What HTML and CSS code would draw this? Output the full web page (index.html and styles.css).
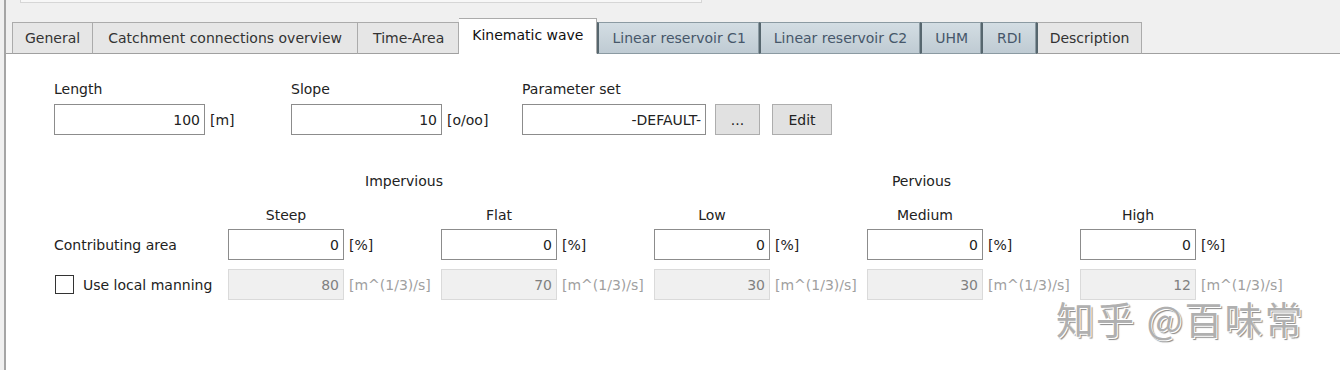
FILE: index.html
```html
<!DOCTYPE html>
<html lang="en">
  <head>
    <meta charset="UTF-8" />
    <meta name="viewport" content="width=device-width, initial-scale=1.0" />
    <title>Kinematic wave</title>
    <link rel="stylesheet" href="styles.css">
  </head>
  <body>
    <div class="window">
      <div class="top-strip">
        <div class="top-field"></div>
      </div>

      <div class="tabs">
        <div class="tab">General</div>
        <div class="tab">Catchment connections overview</div>
        <div class="tab">Time-Area</div>
        <div class="tab active">Kinematic wave</div>
        <div class="tab model">Linear reservoir C1</div>
        <div class="tab model">Linear reservoir C2</div>
        <div class="tab model">UHM</div>
        <div class="tab model">RDI</div>
        <div class="tab">Description</div>
      </div>

      <div class="panel">
        <div class="params">
          <div class="param length">
            <label>Length</label>
            <div class="field-row">
              <input class="num wide" type="text" value="100" readonly />
              <span class="unit">[m]</span>
            </div>
          </div>
          <div class="param slope">
            <label>Slope</label>
            <div class="field-row">
              <input class="num wide" type="text" value="10" readonly />
              <span class="unit">[o/oo]</span>
            </div>
          </div>
          <div class="param">
            <label>Parameter set</label>
            <div class="field-row">
              <input class="num paramset" type="text" value="-DEFAULT-" readonly />
              <button class="btn dots" type="button">...</button>
              <button class="btn edit" type="button">Edit</button>
            </div>
          </div>
        </div>

        <div class="surface-grid">
          <div class="group impervious">Impervious</div>
          <div class="group pervious">Pervious</div>

          <div></div>
          <div class="col-head">Steep</div>
          <div class="col-head">Flat</div>
          <div class="col-head">Low</div>
          <div class="col-head">Medium</div>
          <div class="col-head">High</div>

          <div class="row-label">Contributing area</div>
          <div class="cell"><input class="num small" type="text" value="0" readonly /><span class="unit">[%]</span></div>
          <div class="cell"><input class="num small" type="text" value="0" readonly /><span class="unit">[%]</span></div>
          <div class="cell"><input class="num small" type="text" value="0" readonly /><span class="unit">[%]</span></div>
          <div class="cell"><input class="num small" type="text" value="0" readonly /><span class="unit">[%]</span></div>
          <div class="cell"><input class="num small" type="text" value="0" readonly /><span class="unit">[%]</span></div>

          <div class="row-label check-label"><span class="checkbox"></span>Use local manning</div>
          <div class="cell off"><input class="num small" type="text" value="80" disabled /><span class="unit">[m^(1/3)/s]</span></div>
          <div class="cell off"><input class="num small" type="text" value="70" disabled /><span class="unit">[m^(1/3)/s]</span></div>
          <div class="cell off"><input class="num small" type="text" value="30" disabled /><span class="unit">[m^(1/3)/s]</span></div>
          <div class="cell off"><input class="num small" type="text" value="30" disabled /><span class="unit">[m^(1/3)/s]</span></div>
          <div class="cell off"><input class="num small" type="text" value="12" disabled /><span class="unit">[m^(1/3)/s]</span></div>
        </div>

        <div class="watermark">知乎 @百味常</div>
      </div>
    </div>
  </body>
</html>
```

FILE: styles.css
```css
body {
  margin: 0;
  width: 1340px;
  height: 370px;
  overflow: hidden;
  background-color: #f0f0f0;
  font-family: "DejaVu Sans", Verdana, sans-serif;
  font-size: 14px;
  color: #222;
}
.window {
  margin-left: 4px;
  height: 370px;
  border-left: 2px solid #a5a5a5;
  display: flex;
  flex-direction: column;
}
.top-strip {
  height: 19px;
}
.top-field {
  margin-left: 14px;
  width: 680px;
  height: 2px;
  border: 1px solid #d6d6d6;
  border-top: none;
  background-color: #f7f7f7;
}
.tabs {
  display: flex;
  align-items: flex-end;
  padding-left: 6px;
  height: 34px;
  border-bottom: 1px solid #a0a0a0;
  position: relative;
  z-index: 1;
}
.tab {
  height: 30px;
  line-height: 31px;
  padding: 0 12px;
  margin-bottom: -1px;
  background-color: #e6e6e6;
  border: 1px solid #ababab;
  border-bottom-color: #a0a0a0;
  border-left: none;
  color: #333;
  white-space: nowrap;
}
.tab:first-child {
  border-left: 1px solid #ababab;
}
.tab:nth-child(2) {
  padding: 0 15px;
}
.tab:nth-child(3) {
  padding: 0 14px 0 15px;
}
.tab.active {
  height: 34px;
  line-height: 32px;
  background-color: #fff;
  border-bottom-color: #fff;
  color: #111;
  padding: 0 13px;
}
.tab.model {
  background: linear-gradient(#d3dde3, #bfcbd3);
  border: 1px solid #8b9aa2;
  border-left: 2px solid #56666e;
  color: #46576a;
  padding: 0 12px 0 13px;
}
.tab.model:nth-child(8) {
  padding: 0 13px 0 14px;
}
.tab.model + .tab:not(.model) {
  border-left: 2px solid #56666e;
}
.panel {
  flex: 1;
  background-color: #fff;
  padding: 27px 0 0 48px;
  position: relative;
}
.params {
  display: flex;
}
.param label {
  display: block;
  height: 19px;
  margin-bottom: 4px;
}
.param.length {
  width: 237px;
}
.param.slope {
  width: 231px;
}
.field-row {
  display: flex;
  align-items: center;
}
input.num {
  font-family: inherit;
  font-size: 14px;
  color: #222;
  text-align: right;
  height: 31px;
  box-sizing: border-box;
  padding: 0 4px;
  border: 1px solid #8c8c8c;
  background-color: #fff;
  outline: none;
}
input.wide {
  width: 151px;
}
input.paramset {
  width: 184px;
}
input.small {
  width: 116px;
}
.unit {
  margin-left: 5px;
  white-space: nowrap;
}
.btn {
  font-family: inherit;
  font-size: 14px;
  color: #222;
  height: 31px;
  box-sizing: border-box;
  background-color: #e1e1e1;
  border: 1px solid #adadad;
  padding: 0;
}
.btn.dots {
  width: 45px;
  margin-left: 9px;
}
.btn.edit {
  width: 60px;
  margin-left: 12px;
}
.surface-grid {
  display: grid;
  grid-template-columns: 174px repeat(5, 213px);
  margin-top: 38px;
}
.group {
  height: 19px;
  margin-bottom: 15px;
  text-align: center;
}
.impervious {
  grid-column: 2 / 4;
  padding-right: 74px;
}
.pervious {
  grid-column: 4 / 7;
  padding-right: 104px;
}
.col-head {
  width: 116px;
  text-align: center;
  height: 19px;
  margin-bottom: 3px;
}
.row-label {
  display: flex;
  align-items: center;
  height: 31px;
}
.cell {
  display: flex;
  align-items: center;
  height: 31px;
}
.check-label,
.cell.off {
  margin-top: 9px;
}
.checkbox {
  width: 17px;
  height: 17px;
  border: 1px solid #333;
  background-color: #fff;
  margin: 0 9px 0 1px;
}
.cell.off input.num {
  background-color: #f0f0f0;
  border-color: #dadada;
  color: #808080;
}
.cell.off .unit {
  color: #a0a0a0;
}
.watermark {
  position: absolute;
  left: 1050px;
  top: 245px;
  line-height: 38px;
  font-family: "Noto Sans CJK SC", sans-serif;
  font-size: 38px;
  letter-spacing: 2px;
  color: #b0b0b0;
  text-shadow: 1px 1px 0 #fff, -1px -1px 0 #fff, 2px 2px 1px #8a8a8a;
}
```
